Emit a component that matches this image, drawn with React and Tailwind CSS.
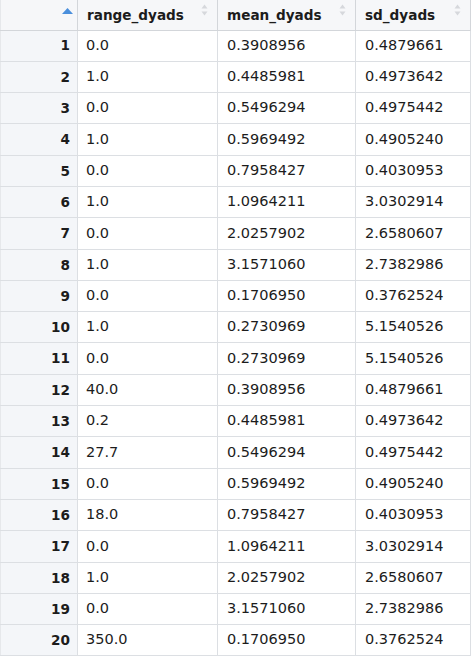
import React from 'react';

const rows = [
  ['0.0', '0.3908956', '0.4879661'],
  ['1.0', '0.4485981', '0.4973642'],
  ['0.0', '0.5496294', '0.4975442'],
  ['1.0', '0.5969492', '0.4905240'],
  ['0.0', '0.7958427', '0.4030953'],
  ['1.0', '1.0964211', '3.0302914'],
  ['0.0', '2.0257902', '2.6580607'],
  ['1.0', '3.1571060', '2.7382986'],
  ['0.0', '0.1706950', '0.3762524'],
  ['1.0', '0.2730969', '5.1540526'],
  ['0.0', '0.2730969', '5.1540526'],
  ['40.0', '0.3908956', '0.4879661'],
  ['0.2', '0.4485981', '0.4973642'],
  ['27.7', '0.5496294', '0.4975442'],
  ['0.0', '0.5969492', '0.4905240'],
  ['18.0', '0.7958427', '0.4030953'],
  ['0.0', '1.0964211', '3.0302914'],
  ['1.0', '2.0257902', '2.6580607'],
  ['0.0', '3.1571060', '2.7382986'],
  ['350.0', '0.1706950', '0.3762524'],
];

// faint up/down sort hint in the corner of each header
const SortArrows = () => (
  <svg width="7" height="12" viewBox="0 0 7 12" className="absolute right-[9px] top-[4px]">
    <path d="M3.5 0.5 L6.5 4.5 L0.5 4.5 Z" fill="#d6d8dc" />
    <path d="M3.5 11.5 L6.5 7.5 L0.5 7.5 Z" fill="#d6d8dc" />
  </svg>
);

const HeaderCell = ({ label, width }) => (
  <th className={`${width} relative h-[30px] border-r border-b border-[#d3d6da] pl-[9px] text-left text-[13.6px] font-bold align-middle`}>
    {label}
    <SortArrows />
  </th>
);

export default function App() {
  return (
    <div className="w-[474px] h-[662px] bg-white text-[#1c1c1c] text-[14.5px] font-['DejaVu_Sans',sans-serif]">
      <table className="border-collapse table-fixed w-[470px] border-l border-[#e6e8eb]">
        <thead>
          <tr className="bg-[#f6f7f9]">
            <th className="w-[77px] relative h-[30px] border-r border-b border-[#d3d6da]">
              <svg width="11" height="6" viewBox="0 0 11 6" className="absolute left-[61px] top-[8px]">
                <path d="M5.5 0 L11 6 L0 6 Z" fill="#4a8fdc" />
              </svg>
            </th>
            <HeaderCell label="range_dyads" width="w-[140px]" />
            <HeaderCell label="mean_dyads" width="w-[138px]" />
            <HeaderCell label="sd_dyads" width="w-[115px]" />
          </tr>
        </thead>
        <tbody>
          {rows.map((r, i) => (
            <tr key={i} className="h-[31.3px]">
              <td className="bg-[#f4f6f9] border-r border-b border-[#dcdfe3] text-right pr-[7px] text-[13.6px] font-bold">{i + 1}</td>
              <td className="border-r border-b border-[#dcdfe3] pl-[8px]">{r[0]}</td>
              <td className="border-r border-b border-[#dcdfe3] pl-[9px]">{r[1]}</td>
              <td className="border-r border-b border-[#dcdfe3] pl-[9px]">{r[2]}</td>
            </tr>
          ))}
        </tbody>
      </table>
    </div>
  );
}
